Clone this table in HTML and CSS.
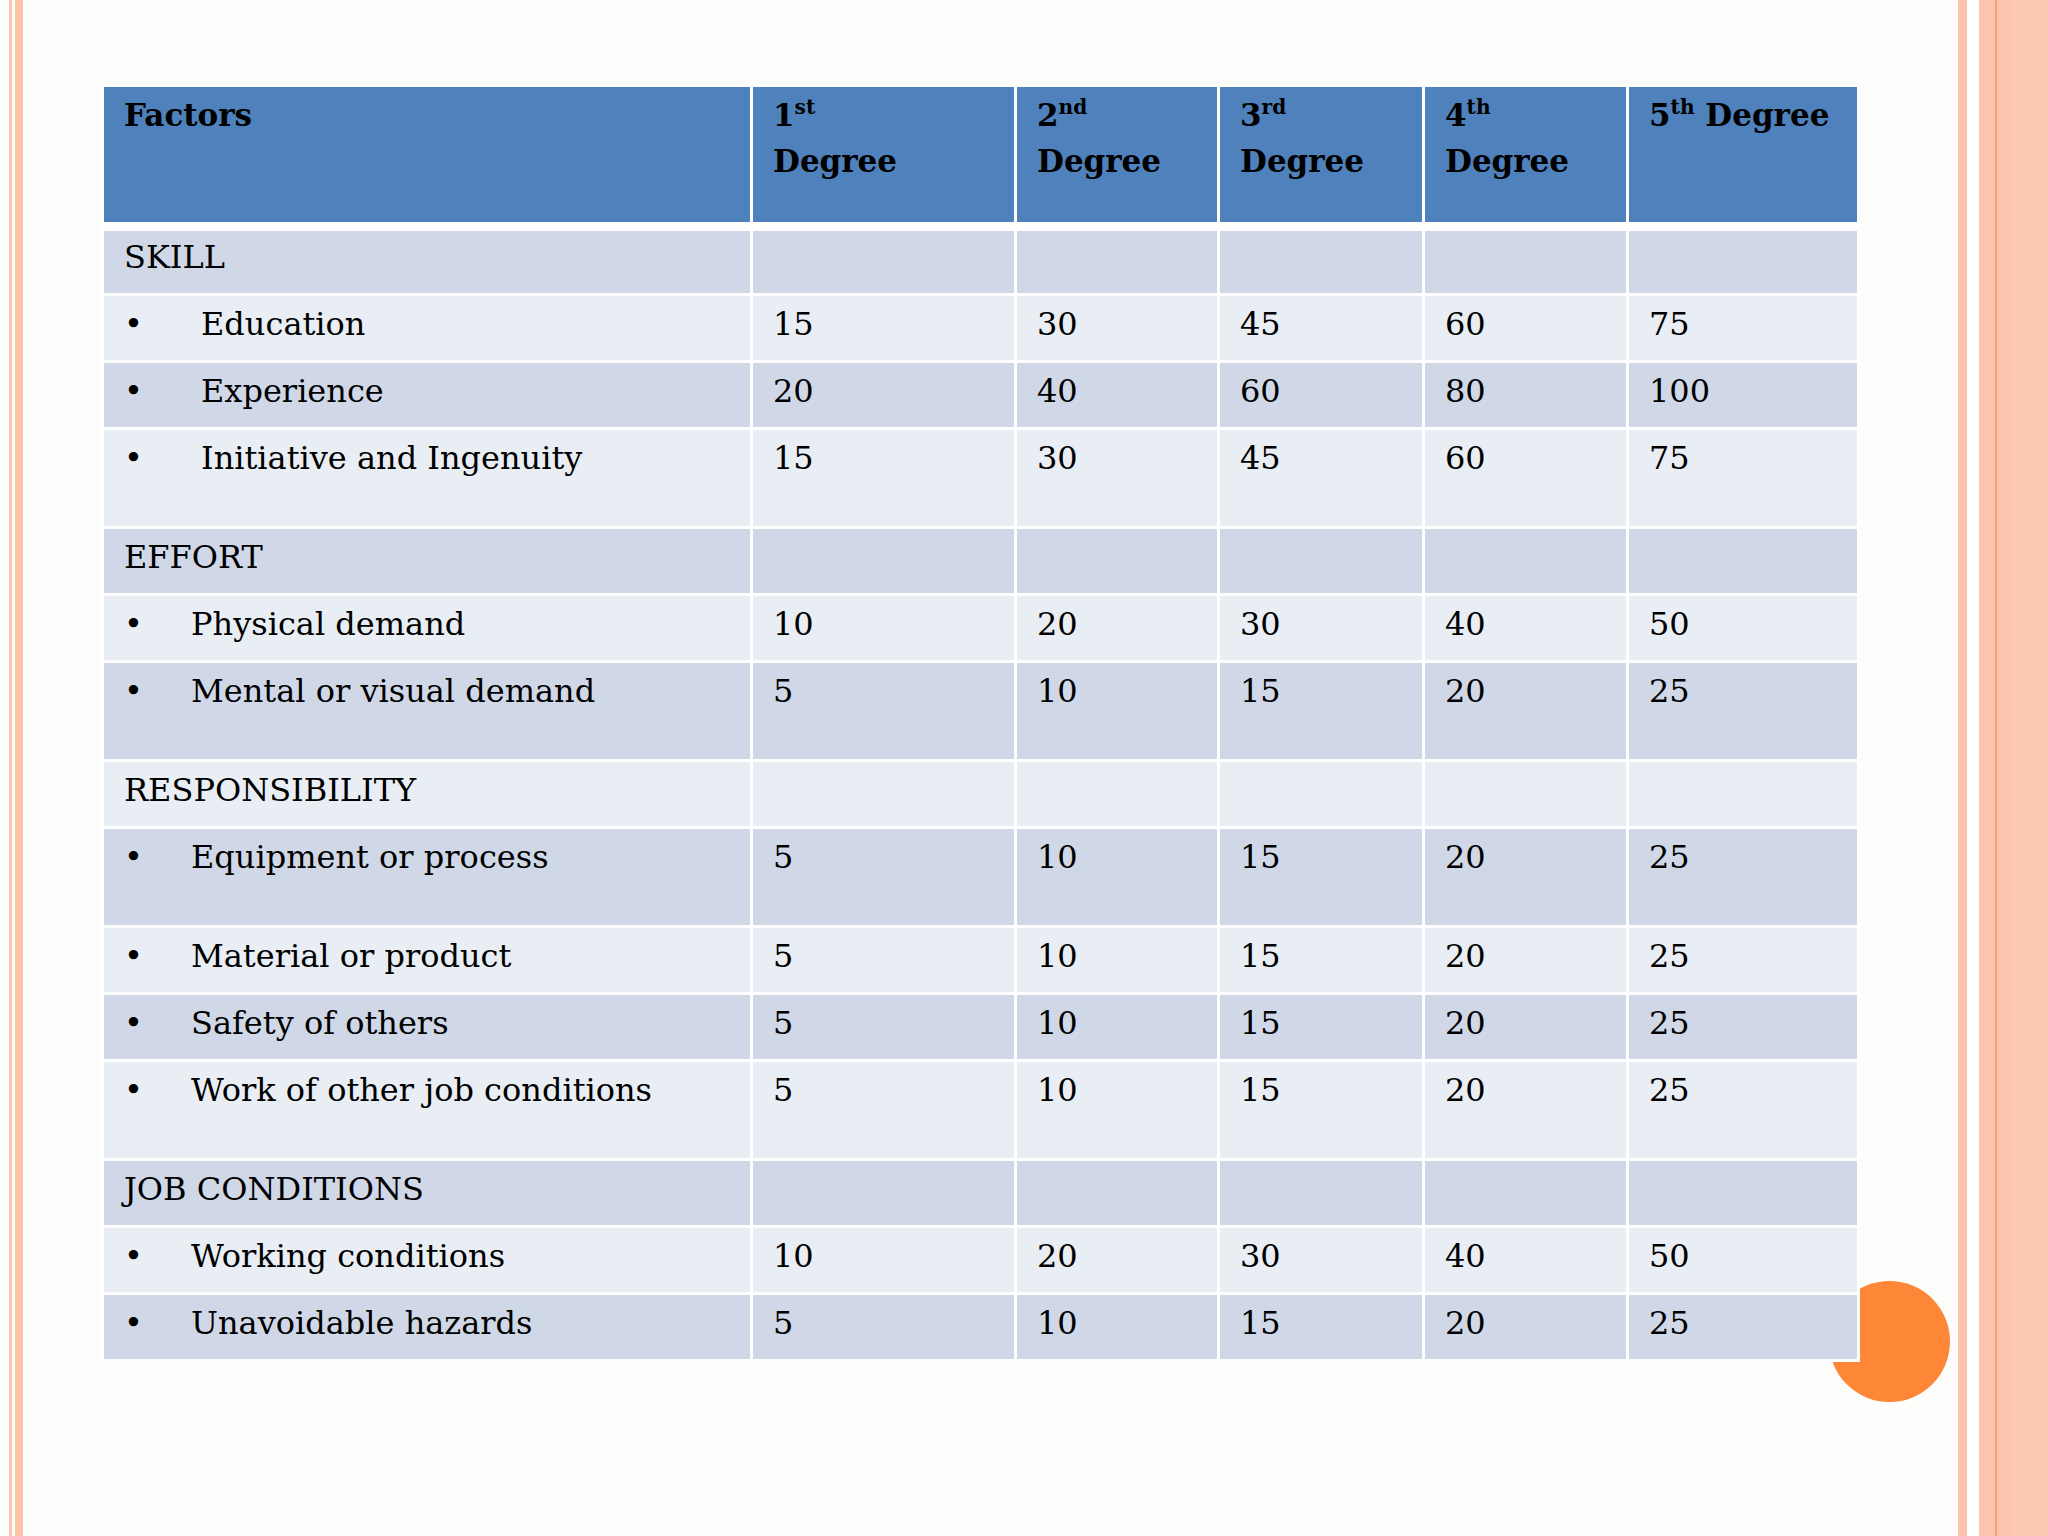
FILE: index.html
```html
<!DOCTYPE html>
<html lang="en">
<head>
<meta charset="utf-8">
<title>Job Evaluation Factors</title>
<link rel="stylesheet" href="styles.css">
</head>
<body>
<main class="slide">
  <table class="factors">
    <colgroup>
      <col class="c-factor"><col class="c-d1"><col class="c-d2"><col class="c-d3"><col class="c-d4"><col class="c-d5">
    </colgroup>
    <thead>
      <tr>
        <th>Factors</th>
        <th>1<sup>st</sup><br>Degree</th>
        <th>2<sup>nd</sup><br>Degree</th>
        <th>3<sup>rd</sup><br>Degree</th>
        <th>4<sup>th</sup><br>Degree</th>
        <th>5<sup>th</sup> Degree</th>
      </tr>
    </thead>
    <tbody>
      <tr class="dark single first"><td>SKILL</td><td></td><td></td><td></td><td></td><td></td></tr>
      <tr class="light single"><td><span class="bullet wide">•</span>Education</td><td>15</td><td>30</td><td>45</td><td>60</td><td>75</td></tr>
      <tr class="dark single"><td><span class="bullet wide">•</span>Experience</td><td>20</td><td>40</td><td>60</td><td>80</td><td>100</td></tr>
      <tr class="light double"><td><span class="bullet wide">•</span>Initiative and Ingenuity</td><td>15</td><td>30</td><td>45</td><td>60</td><td>75</td></tr>
      <tr class="dark single"><td>EFFORT</td><td></td><td></td><td></td><td></td><td></td></tr>
      <tr class="light single"><td><span class="bullet">•</span>Physical demand</td><td>10</td><td>20</td><td>30</td><td>40</td><td>50</td></tr>
      <tr class="dark double"><td><span class="bullet">•</span>Mental or visual demand</td><td>5</td><td>10</td><td>15</td><td>20</td><td>25</td></tr>
      <tr class="light single"><td>RESPONSIBILITY</td><td></td><td></td><td></td><td></td><td></td></tr>
      <tr class="dark double"><td><span class="bullet">•</span>Equipment or process</td><td>5</td><td>10</td><td>15</td><td>20</td><td>25</td></tr>
      <tr class="light single"><td><span class="bullet">•</span>Material or product</td><td>5</td><td>10</td><td>15</td><td>20</td><td>25</td></tr>
      <tr class="dark single"><td><span class="bullet">•</span>Safety of others</td><td>5</td><td>10</td><td>15</td><td>20</td><td>25</td></tr>
      <tr class="light double"><td><span class="bullet">•</span>Work of other job conditions</td><td>5</td><td>10</td><td>15</td><td>20</td><td>25</td></tr>
      <tr class="dark single"><td>JOB CONDITIONS</td><td></td><td></td><td></td><td></td><td></td></tr>
      <tr class="light single"><td><span class="bullet">•</span>Working conditions</td><td>10</td><td>20</td><td>30</td><td>40</td><td>50</td></tr>
      <tr class="dark single"><td><span class="bullet">•</span>Unavoidable hazards</td><td>5</td><td>10</td><td>15</td><td>20</td><td>25</td></tr>
    </tbody>
  </table>
  <div class="dot" aria-hidden="true"></div>
</main>
</body>
</html>
```
FILE: styles.css
```css
html, body {
  margin: 0;
  padding: 0;
}

body {
  width: 2048px;
  height: 1536px;
  overflow: hidden;
  font-family: "DejaVu Serif", "Liberation Serif", serif;
  color: #000;
  background:
    linear-gradient(to right,
      #fdfdfb 0, #fdfdfb 9px,
      #fcc6b0 9px, #fcc6b0 12px,
      #fdfdfb 12px, #fdfdfb 15px,
      #fcc3ab 15px, #fcc3ab 23px,
      #fdfdfb 23px, #fdfdfb 1958px,
      #fcc4ad 1958px, #fcc4ad 1967px,
      #ffffff 1967px, #ffffff 1979px,
      #fcc4ad 1979px, #fcc4ad 1995px,
      #f6a16f 1995px, #f6a16f 1997px,
      #fcc4ad 1997px, #fcc4ad 2011px,
      #fcc9b3 2011px, #fcc9b3 2048px);
}

.slide {
  position: relative;
  height: 1536px;
  padding: 84px 0 0 101px;
  box-sizing: border-box;
}

.factors {
  position: relative;
  z-index: 1;
  border-collapse: separate;
  border-spacing: 3px;
  background: #fff;
  table-layout: fixed;
  width: 1759px;
}

.c-factor { width: 646px; }
.c-d1 { width: 261px; }
.c-d2 { width: 200px; }
.c-d3 { width: 202px; }
.c-d4 { width: 201px; }
.c-d5 { width: 228px; }

.factors th,
.factors td {
  box-sizing: border-box;
  text-align: left;
  vertical-align: top;
  padding: 0 10px 0 20px;
  white-space: nowrap;
}

.factors th {
  height: 141px;
  background: #4f81bd;
  background-clip: padding-box;
  border-bottom: 6px solid #fff;
  font-size: 31px;
  font-weight: bold;
  line-height: 46px;
  padding-top: 5px;
}

.factors th sup {
  font-size: 0.65em;
  line-height: 0;
  vertical-align: 0.6em;
}

.factors td {
  font-size: 32px;
  line-height: 40px;
  padding-top: 8px;
}

.single td { height: 64px; }
.double td { height: 96px; }
.first td { height: 62px; padding-top: 6px; }

.dark td { background: #d0d8e8; }
.light td { background: #e9edf4; }

.bullet {
  display: inline-block;
  width: 67px;
}

.bullet.wide {
  width: 77px;
}

.dot {
  position: absolute;
  left: 1829px;
  top: 1281px;
  width: 121px;
  height: 121px;
  border-radius: 50%;
  background: #fd8637;
  z-index: 0;
}
```
